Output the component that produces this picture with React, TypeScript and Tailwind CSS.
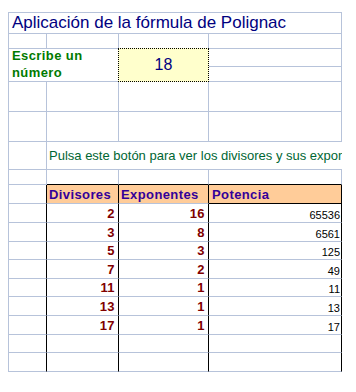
const grid = "border-r border-b border-[#b7c3da]";

const rows: [number, number, number][] = [
  [2, 16, 65536],
  [3, 8, 6561],
  [5, 3, 125],
  [7, 2, 49],
  [11, 1, 11],
  [13, 1, 13],
  [17, 1, 17],
];

function DataRow({ row }: { row: [number, number, number] | null }) {
  return (
    <>
      <div className="border-r border-b border-r-black border-r-dotted border-b-[#b7c3da]" />
      <div className="flex items-end justify-end border-r border-b border-r-black border-r-dotted border-b-[#b7c3da] pr-[3px] pb-px text-[13px] leading-[15px] font-bold tracking-[0.4px] text-[#800000]">
        {row?.[0]}
      </div>
      <div className="flex items-end justify-end border-r border-b border-r-black border-b-[#b7c3da] pr-[3px] pb-px text-[13px] leading-[15px] font-bold tracking-[0.4px] text-[#800000]">
        {row?.[1]}
      </div>
      <div className="flex items-end justify-end border-r border-b border-r-black border-b-[#b7c3da] pr-px text-[11px] leading-[13px] text-black">
        {row?.[2]}
      </div>
    </>
  );
}

export default function App() {
  return (
    <div className="min-h-[392px] w-[356px] bg-white pt-[12px] pl-[8px] font-['Liberation_Sans',Arial,sans-serif]">
      <div className="grid w-max grid-cols-[38px_72px_90px_133px] grid-rows-[21px_15px_33px_30px_30px_28px_15px_19px_19px_19px_18px_19px_18px_19px_19px_18px_19px] border-t border-l border-[#b7c3da]">
        {/* title */}
        <div className={`${grid} col-span-4 flex items-end pl-[3px] text-[17px] leading-[20px] text-[#000080]`}>
          Aplicación de la fórmula de Polignac
        </div>

        <div className={grid} />
        <div className={grid} />
        <div className={grid} />
        <div className={grid} />

        {/* input row */}
        <div className={`${grid} col-span-2 flex items-end pl-[3px]`}>
          <span className="text-[13px] leading-[17px] font-bold tracking-[0.4px] text-[#007a00]">
            Escribe un
            <br />
            número
          </span>
        </div>
        <div className="relative z-10 -mt-px -ml-px flex items-center justify-center border border-dotted border-black bg-[#ffffcc] text-[16px] leading-[18px] text-[#000080]">
          18
        </div>
        <div className={`${grid} flex flex-col`}>
          <div className="h-[18px] border-b border-[#b7c3da]" />
          <div className="flex-1" />
        </div>

        {[0, 1].map((r) => (
          <div key={r} className="contents">
            <div className={grid} />
            <div className={grid} />
            <div className={grid} />
            <div className={grid} />
          </div>
        ))}

        {/* instruction */}
        <div className={grid} />
        <div className="col-span-3 flex items-center overflow-hidden border-b border-[#b7c3da] pl-[2px] whitespace-nowrap text-[13px] leading-[15px] text-[#006633]">
          Pulsa este botón para ver los divisores y sus exponentes
        </div>

        <div className={grid} />
        <div className="border-r border-b border-r-[#b7c3da] border-b-black border-b-dotted" />
        <div className="border-r border-b border-r-[#b7c3da] border-b-black border-b-dotted" />
        <div className="border-r border-b border-r-[#b7c3da] border-b-black border-b-dotted" />

        {/* header */}
        <div className="border-r border-b border-r-black border-r-dotted border-b-[#b7c3da]" />
        <div className="flex items-end border-r border-b border-r-black border-r-dotted border-b-[#b7c3da] bg-[#ffcc99] pb-px pl-[2px] text-[13px] leading-[15px] font-bold tracking-[0.4px] text-[#330099]">
          Divisores
        </div>
        <div className="flex items-end border-r border-b border-r-black border-r-dotted border-b-[#b7c3da] bg-[#ffcc99] pb-px pl-[2px] text-[13px] leading-[15px] font-bold tracking-[0.4px] text-[#330099]">
          Exponentes
        </div>
        <div className="flex items-end border-r border-b border-r-black border-r-dotted border-b-black bg-[#ffcc99] pb-px pl-[3px] text-[13px] leading-[15px] font-bold tracking-[0.4px] text-[#330099]">
          Potencia
        </div>

        {rows.map((row) => (
          <DataRow key={row[0]} row={row} />
        ))}
        <DataRow row={null} />
        <DataRow row={null} />
      </div>
    </div>
  );
}
